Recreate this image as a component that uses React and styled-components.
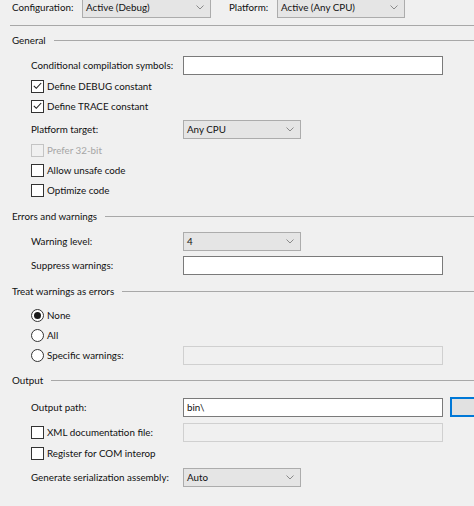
import React from 'react';
import styled, { createGlobalStyle } from 'styled-components';

const GlobalStyle = createGlobalStyle`
  html, body {
    margin: 0;
    padding: 0;
    background: #f0f0f0;
    overflow: hidden;
  }
  body {
    font-family: Lato, 'Noto Sans', sans-serif;
    font-size: 9.8px;
    color: #111111;
  }
`;

const Page = styled.div`
  width: 474px;
  height: 506px;
  overflow: hidden;
`;

const TopBar = styled.div`
  display: flex;
  align-items: center;
  height: 26px;
  margin-top: -6px;
  padding-left: 12px;
  white-space: nowrap;
`;

const TopLabel = styled.span`
  width: ${(p) => p.w}px;
  margin-left: ${(p) => p.gap || 0}px;
  flex: none;
`;

const Divider = styled.div`
  height: 1px;
  margin: 5px 0 0 10px;
  background: #a8a8a8;
`;

const Row = styled.div`
  display: flex;
  align-items: center;
  height: 20px;
  margin-top: ${(p) => p.top || 0}px;
  padding-left: ${(p) => (p.heading ? 12 : 31)}px;
  color: ${(p) => (p.disabled ? '#a6a6a6' : 'inherit')};
  white-space: nowrap;
`;

const HeadingLine = styled.div`
  flex: 1;
  height: 1px;
  margin-left: 8px;
  background: #a8a8a8;
`;

const Label = styled.span`
  width: 152px;
  flex: none;
`;

const CheckLabel = styled.span`
  width: ${(p) => (p.fixed ? '136px' : 'auto')};
  flex: none;
  margin-left: 3px;
`;

const Box = styled.span`
  width: 11px;
  height: 11px;
  flex: none;
  border: 1px solid ${(p) => (p.disabled ? '#c4c4c4' : '#333333')};
  background: ${(p) => (p.disabled ? '#f0f0f0' : '#ffffff')};
  display: flex;
  align-items: center;
  justify-content: center;
`;

const RadioRing = styled.span`
  width: 11px;
  height: 11px;
  flex: none;
  border: 1px solid #333333;
  border-radius: 50%;
  background: #ffffff;
  display: flex;
  align-items: center;
  justify-content: center;
`;

const RadioDot = styled.span`
  width: 7px;
  height: 7px;
  border-radius: 50%;
  background: #1b1b1b;
`;

const Select = styled.div`
  box-sizing: border-box;
  width: ${(p) => p.w || 118}px;
  height: ${(p) => p.h || 19}px;
  flex: none;
  display: flex;
  align-items: center;
  justify-content: space-between;
  padding: 0 6px 0 3px;
  background: #e5e5e5;
  border: 1px solid #acacac;
`;

const TextBox = styled.div`
  box-sizing: border-box;
  width: 260px;
  height: 19px;
  flex: none;
  display: flex;
  align-items: center;
  padding-left: 3px;
  background: ${(p) => (p.disabled ? '#f0f0f0' : '#ffffff')};
  border: 1px solid ${(p) => (p.disabled ? '#d0d0d0' : '#7a7a7a')};
`;

const BrowseButton = styled.div`
  box-sizing: border-box;
  width: 75px;
  height: 20px;
  flex: none;
  margin-left: 7px;
  background: #e1e1e1;
  border: 2px solid #0078d7;
`;

const Chevron = () => (
  <svg width="8" height="5" viewBox="0 0 8 5">
    <path d="M0.5 0.5 L4 4 L7.5 0.5" fill="none" stroke="#8a8a8a" strokeWidth="1" />
  </svg>
);

const Tick = () => (
  <svg width="9" height="8" viewBox="0 0 9 8">
    <path d="M0.8 3.8 L3.3 6.3 L8.2 1" fill="none" stroke="#1b1b1b" strokeWidth="1.1" />
  </svg>
);

const Check = ({ checked, disabled, children, fixed }) => (
  <>
    <Box disabled={disabled}>{checked && <Tick />}</Box>
    <CheckLabel fixed={fixed}>{children}</CheckLabel>
  </>
);

const Radio = ({ checked, children, fixed }) => (
  <>
    <RadioRing>{checked && <RadioDot />}</RadioRing>
    <CheckLabel fixed={fixed}>{children}</CheckLabel>
  </>
);

const Dropdown = ({ value, w, h }) => (
  <Select w={w} h={h}>
    <span>{value}</span>
    <Chevron />
  </Select>
);

const Heading = ({ top, children }) => (
  <Row heading top={top}>
    <span>{children}</span>
    <HeadingLine />
  </Row>
);

export default function App() {
  return (
    <Page>
      <GlobalStyle />
      <TopBar>
        <TopLabel w={70}>Configuration:</TopLabel>
        <Dropdown value="Active (Debug)" w={129} h={21} />
        <TopLabel w={48} gap={18}>Platform:</TopLabel>
        <Dropdown value="Active (Any CPU)" w={128} h={21} />
      </TopBar>
      <Divider />

      <Heading top={4}>General</Heading>
      <Row top={5}>
        <Label>Conditional compilation symbols:</Label>
        <TextBox />
      </Row>
      <Row top={1}>
        <Check checked>Define DEBUG constant</Check>
      </Row>
      <Row>
        <Check checked>Define TRACE constant</Check>
      </Row>
      <Row top={3}>
        <Label>Platform target:</Label>
        <Dropdown value="Any CPU" />
      </Row>
      <Row top={1} disabled>
        <Check disabled>Prefer 32-bit</Check>
      </Row>
      <Row>
        <Check>Allow unsafe code</Check>
      </Row>
      <Row>
        <Check>Optimize code</Check>
      </Row>

      <Heading top={6}>Errors and warnings</Heading>
      <Row top={5}>
        <Label>Warning level:</Label>
        <Dropdown value="4" />
      </Row>
      <Row top={4}>
        <Label>Suppress warnings:</Label>
        <TextBox />
      </Row>

      <Heading top={6}>Treat warnings as errors</Heading>
      <Row top={4}>
        <Radio checked>None</Radio>
      </Row>
      <Row>
        <Radio>All</Radio>
      </Row>
      <Row>
        <Radio fixed>Specific warnings:</Radio>
        <TextBox disabled />
      </Row>

      <Heading top={5}>Output</Heading>
      <Row top={7}>
        <Label>Output path:</Label>
        <TextBox>bin\</TextBox>
        <BrowseButton />
      </Row>
      <Row top={5}>
        <Check fixed>XML documentation file:</Check>
        <TextBox disabled />
      </Row>
      <Row top={1}>
        <Check>Register for COM interop</Check>
      </Row>
      <Row top={4}>
        <Label>Generate serialization assembly:</Label>
        <Dropdown value="Auto" />
      </Row>
    </Page>
  );
}
